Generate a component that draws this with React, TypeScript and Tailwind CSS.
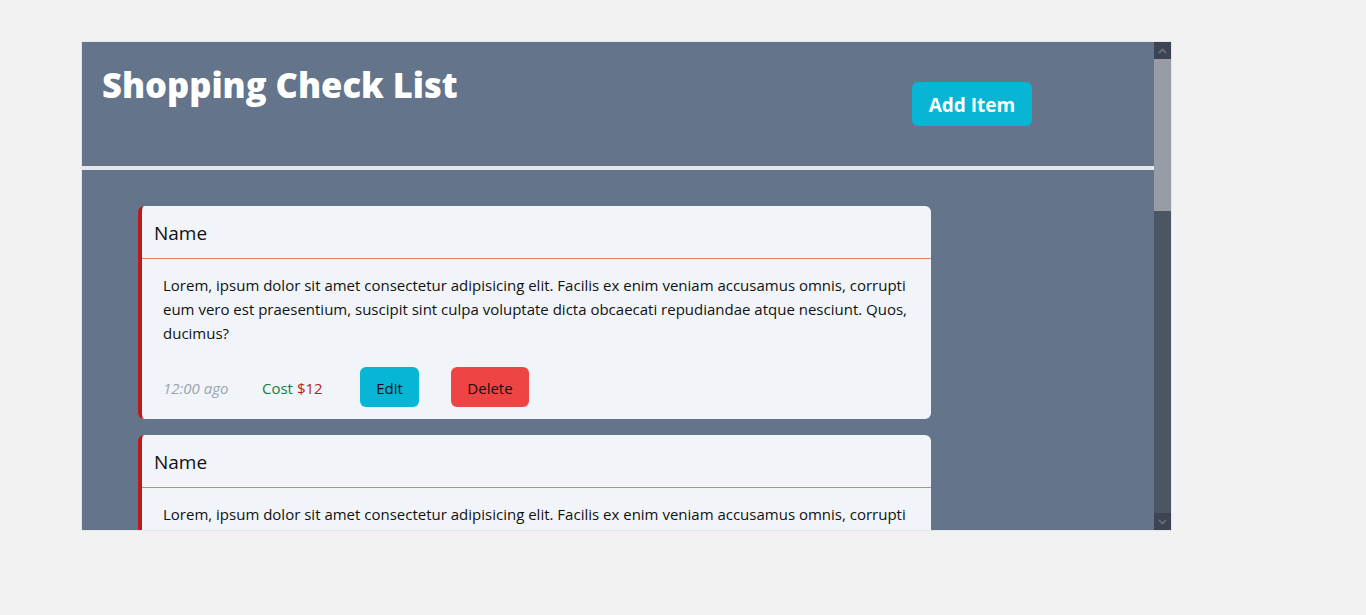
import React from "react";

const lorem =
  "Lorem, ipsum dolor sit amet consectetur adipisicing elit. Facilis ex enim veniam accusamus omnis, corrupti eum vero est praesentium, suscipit sint culpa voluptate dicta obcaecati repudiandae atque nesciunt. Quos, ducimus?";

function Card() {
  return (
    <div className="w-[793px] shrink-0 rounded-md border-l-4 border-[#b91c1c] bg-[#f1f5f9] text-[#111]">
      <div className="flex h-[53px] items-center border-b border-[#f87171] px-3 pt-[3px] text-[19px]">Name</div>
      <div className="pl-[21px] pr-[20px] pt-[14px] pb-3">
        <p className="text-[15px] leading-[24px] text-[#111]">{lorem}</p>
        <div className="mt-[22px] flex items-center text-[15px]">
          <span className="w-[99px] pt-[2px] italic text-[#9ca3af]">12:00 ago</span>
          <span className="w-[98px] pt-[2px] text-[#15803d]">
            Cost <span className="text-[#b91c1c]">$12</span>
          </span>
          <button className="h-[40px] w-[59px] rounded-md bg-[#06b6d4] pt-[2px] text-[#111]">Edit</button>
          <button className="ml-[32px] h-[40px] w-[78px] rounded-md bg-[#ef4444] pt-[2px] text-[#111]">Delete</button>
        </div>
      </div>
    </div>
  );
}

export default function App() {
  return (
    <div
      className="h-[615px] w-[1366px] overflow-hidden bg-[#f2f2f2] pl-[81px] pt-[41px]"
      style={{ fontFamily: '"Open Sans", "Noto Sans", sans-serif' }}
    >
      <div className="flex h-[490px] w-[1091px] border border-[#e3e5e8]">
        <div className="flex min-w-0 flex-1 flex-col overflow-hidden bg-[#64748b]">
          <div className="flex h-[128px] shrink-0 items-start justify-between border-b-4 border-[#e5e7eb] pl-[20px] pr-[122px]">
            <h1 className="mt-[21px] text-[34.5px] font-extrabold leading-[44px] text-white">Shopping Check List</h1>
            <button className="mt-[40px] h-[44px] w-[120px] rounded-md bg-[#06b6d4] pt-[3px] text-[19px] font-bold text-white">
              Add Item
            </button>
          </div>
          <div className="flex flex-col gap-4 pl-[56px] pt-[36px]">
            <Card />
            <Card />
          </div>
        </div>
        <div className="flex w-[17px] shrink-0 flex-col bg-[#4b5563]">
          <div className="flex h-[17px] items-center justify-center bg-[#3d4554]">
            <svg width="9" height="6" viewBox="0 0 9 6">
              <path d="M1 5 L4.5 1.5 L8 5" stroke="#6b7280" strokeWidth="1.6" fill="none" />
            </svg>
          </div>
          <div className="h-[152px] bg-[#979ca6]" />
          <div className="flex-1" />
          <div className="flex h-[17px] items-center justify-center bg-[#3d4554]">
            <svg width="9" height="6" viewBox="0 0 9 6">
              <path d="M1 1 L4.5 4.5 L8 1" stroke="#6b7280" strokeWidth="1.6" fill="none" />
            </svg>
          </div>
        </div>
      </div>
    </div>
  );
}
